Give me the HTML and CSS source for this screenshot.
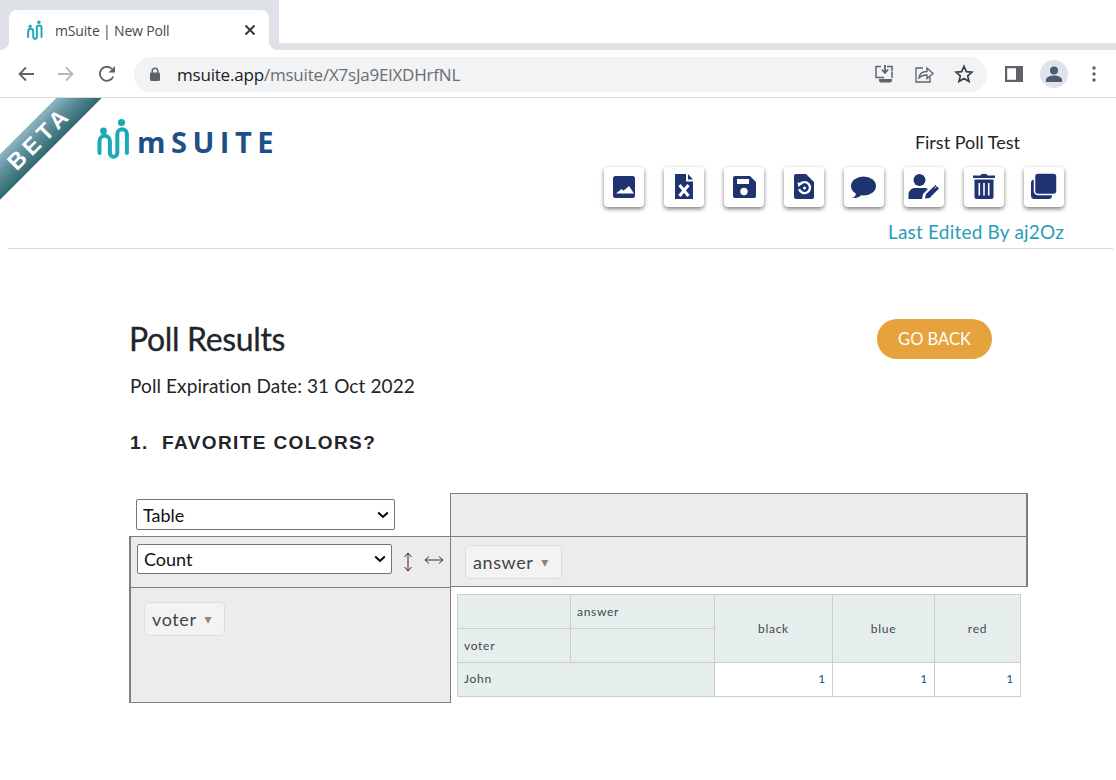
FILE: index.html
```html
<!DOCTYPE html>
<html lang="en">
<head>
<meta charset="utf-8">
<title>mSuite | New Poll</title>
<link rel="stylesheet" href="styles.css">
</head>
<body>
<svg class="defs" width="0" height="0" aria-hidden="true">
  <symbol id="mark" viewBox="96 117 33 43">
    <circle cx="103.5" cy="130" r="3.4" fill="#1ba9b5"/>
    <circle cx="121.5" cy="121.5" r="3.6" fill="#1ba9b5"/>
    <path d="M99.5 152V140a5.2 5.2 0 0 1 10.4 0V152a3.7 3.7 0 0 0 7.400 0V133a4.800 4.800 0 0 1 9.600 0V152" fill="none" stroke="#1ba9b5" stroke-width="4" stroke-linecap="round"/>
  </symbol>
</svg>

<div class="tabstrip">
  <div class="tabzone">
    <div class="tab">
      <svg class="favicon" width="17" height="21"><use href="#mark"/></svg>
      <span class="tab-title">mSuite | New Poll</span>
      <svg class="tab-close" width="12" height="12" viewBox="0 0 12 12"><path d="M1.5 1.5l9 9M10.5 1.5l-9 9" stroke="#33363b" stroke-width="1.9"/></svg>
    </div>
  </div>
  <div class="strip-rest"><div class="strip-white"></div></div>
</div>

<div class="toolbar">
  <svg class="nav" width="18" height="18" viewBox="0 0 18 18"><path d="M17 9H2.5M9 2.5L2.5 9 9 15.5" fill="none" stroke="#5f6368" stroke-width="1.8"/></svg>
  <svg class="nav" width="18" height="18" viewBox="0 0 18 18"><path d="M1 9h14.5M9 2.5L15.5 9 9 15.500" fill="none" stroke="#b4b7bb" stroke-width="1.8"/></svg>
  <svg class="nav" width="18" height="18" viewBox="0 0 18 18"><path d="M15.300 11.500A7 7 0 1 1 14 4" fill="none" stroke="#5f6368" stroke-width="1.800"/><path d="M17 1v6.500h-6.500z" fill="#5f6368"/></svg>
  <div class="omnibox">
    <svg class="lock" width="12" height="14" viewBox="0 0 12 14"><path d="M3.200 6V4a2.800 2.800 0 0 1 5.600 0v2" fill="none" stroke="#5f6368" stroke-width="1.500"/><rect x="1" y="5.500" width="10" height="8.500" rx="1.300" fill="#5f6368"/></svg>
    <span class="url"><span class="url-host">msuite.app</span>/msuite/X7sJa9ElXDHrfNL</span>
    <div class="omni-icons">
      <svg width="20" height="20" viewBox="0 0 20 20"><path d="M7 2.500H2v11h8M13 2.500h5v5" fill="none" stroke="#5f6368" stroke-width="1.500"/><path d="M11 1v7M7.800 5.500L11 9l3.200-3.500" fill="none" stroke="#5f6368" stroke-width="1.800"/><path d="M5 15h13v1.500a2 2 0 0 1-2 2H7a2 2 0 0 1-2-2z" fill="#5f6368"/><path d="M18 8v6" stroke="#5f6368" stroke-width="1.500"/></svg>
      <svg width="20" height="20" viewBox="0 0 20 20"><path d="M9 4H2v14h14v-5" fill="none" stroke="#5f6368" stroke-width="1.300"/><path d="M5 14c.5-4 3.500-6.500 8-6.500V4l6 5.500-6 5V11c-3.500 0-6 1-8 3z" fill="none" stroke="#5f6368" stroke-width="1.300"/></svg>
      <svg width="20" height="20" viewBox="0 0 20 20"><path d="M10 2.300l2.300 5.300 5.700.5-4.300 3.800 1.300 5.600-5-3-5 3 1.300-5.600L2 8.100l5.700-.5z" fill="none" stroke="#3c4043" stroke-width="1.700"/></svg>
    </div>
  </div>
  <svg class="panel-icon" width="18" height="18" viewBox="0 0 18 18"><path fill-rule="evenodd" d="M0 1h18v16H0zM2.200 3.200v11.600h8.800V3.200z" fill="#5f6368"/></svg>
  <div class="avatar"><svg width="20" height="20" viewBox="0 0 20 20"><circle cx="10" cy="6.500" r="4" fill="#4d5a72"/><path d="M2 18v-2c0-3 4-4.500 8-4.500s8 1.500 8 4.500v2z" fill="#4d5a72"/></svg></div>
  <svg class="dots" width="4" height="16" viewBox="0 0 4 16"><circle cx="2" cy="2" r="1.700" fill="#5f6368"/><circle cx="2" cy="8" r="1.700" fill="#5f6368"/><circle cx="2" cy="14" r="1.700" fill="#5f6368"/></svg>
</div>

<div class="beta"><div class="beta-band">BETA</div></div>

<header class="apphead">
  <div class="logo">
    <svg width="33" height="43"><use href="#mark"/></svg>
    <span class="logo-text">mSUITE</span>
  </div>
  <div class="head-right">
    <div class="doc-title">First Poll Test</div>
    <div class="actions">
      <button class="action"><svg viewBox="0 0 40 40"><rect x="9" y="9" width="22" height="22" rx="2.500"/><path d="M12 26.500l5.500-4.500 2 1.800L25 19l5 7.500z" fill="#fff"/></svg></button>
      <button class="action"><svg viewBox="0 0 40 40"><path d="M11 7h11v7.500h7V32H11z"/><path d="M24 7l5 5.500h-5z"/><path d="M15.500 18l9 11M24.500 18l-9 11" stroke="#fff" stroke-width="3"/></svg></button>
      <button class="action"><svg viewBox="0 0 40 40"><path fill-rule="evenodd" d="M11 9h15l6 6v14a2 2 0 0 1-2 2H11a2 2 0 0 1-2-2V11a2 2 0 0 1 2-2zM13 12v5h12v-5z"/><circle cx="20" cy="24.500" r="3.700" fill="#fff"/></svg></button>
      <button class="action"><svg viewBox="0 0 40 40"><path d="M12 7h10l8 8v15a2 2 0 0 1-2 2H12a2 2 0 0 1-2-2V9a2 2 0 0 1 2-2z"/><path d="M16 17.500a5.500 5.500 0 1 1-.800 4.500" fill="none" stroke="#fff" stroke-width="2.400"/><path d="M13.500 15.500l5.500.500-4.500 4z" fill="#fff"/><circle cx="20.500" cy="21" r="1.500" fill="#fff"/></svg></button>
      <button class="action"><svg viewBox="0 0 40 40"><ellipse cx="19.500" cy="19" rx="12.500" ry="9.500"/><path d="M12 25l-.5 3.500c-.5 1-2 2-3.500 2.500 3.500.300 6.500-.500 9-2.500z"/></svg></button>
      <button class="action"><svg viewBox="0 0 40 40"><circle cx="15.500" cy="13" r="6"/><path d="M4.500 32v-4c0-4 3-7 6-7h10c1.500 0 2.500.500 3.500 1l-5 5-1 5z"/><path d="M21 31.500l1-4.500 9.500-9 3.500 3.500-9.500 9.500z"/><path d="M30.500 21.300l2-2" stroke="#fff" stroke-width="1"/></svg></button>
      <button class="action"><svg viewBox="0 0 40 40"><path d="M9 8.500h7.500L17.500 7h5l1 1.500H31V11H9z"/><path fill-rule="evenodd" d="M10.500 12.500h19V30a2 2 0 0 1-2 2h-15a2 2 0 0 1-2-2zM14.500 16v12.500h1.600V16zM19.200 16v12.500h1.600V16zM23.900 16v12.500h1.600V16z"/></svg></button>
      <button class="action"><svg viewBox="0 0 40 40"><rect x="7" y="12.500" width="21" height="19.500" rx="3.500"/><rect x="10.500" y="6" width="22.500" height="21.500" rx="3.500" stroke="#fff" stroke-width="1.500"/></svg></button>
    </div>
    <div class="last-edited">Last Edited By aj2Oz</div>
  </div>
</header>

<main class="content">
  <div class="title-row">
    <h1 class="page-title">Poll Results</h1>
    <button class="go-back">GO BACK</button>
  </div>
  <p class="expiry">Poll Expiration Date: 31 Oct 2022</p>
  <h2 class="question">1.&nbsp; FAVORITE COLORS?</h2>

  <div class="pivot">
    <div class="cell-render">
      <select class="pick pick-render"><option>Table</option></select>
    </div>
    <div class="cell cell-top"></div>
    <div class="cell cell-aggr">
      <select class="pick pick-aggr"><option>Count</option></select>
      <svg class="sort-v" width="10" height="20" viewBox="0 0 10 20"><path d="M5 1v18" stroke="#7b2d7b" stroke-width="1.200"/><path d="M1.500 5L5 1l3.500 4M1.500 15L5 19l3.500-4" fill="none" stroke="#333" stroke-width="1"/></svg>
      <svg class="sort-h" width="20" height="10" viewBox="0 0 20 10"><path d="M1 5h18" stroke="#333" stroke-width="1"/><path d="M5 1.500L1 5l4 3.500M15 1.500L19 5l-4 3.500" fill="none" stroke="#333" stroke-width="1"/></svg>
    </div>
    <div class="cell cell-cols"><span class="pill">answer <span class="caret">▾</span></span></div>
    <div class="cell cell-rows"><span class="pill">voter <span class="caret">▾</span></span></div>
    <div class="cell-out">
      <table class="pvt">
        <colgroup><col class="c1"><col class="c2"><col class="c3"><col class="c4"><col class="c5"></colgroup>
        <tr><th class="tl"></th><th class="tl">answer</th><th rowspan="2">black</th><th rowspan="2">blue</th><th rowspan="2">red</th></tr>
        <tr><th class="bl">voter</th><th></th></tr>
        <tr><th colspan="2" class="row-h">John</th><td>1</td><td>1</td><td>1</td></tr>
      </table>
    </div>
  </div>
</main>
</body>
</html>
```
FILE: styles.css
```css
* { box-sizing: border-box; }
html, body { margin: 0; padding: 0; }
body {
  width: 1116px;
  height: 780px;
  overflow: hidden;
  background: #fff;
  color: #212529;
  font-family: "Lato", sans-serif;
  position: relative;
}
.defs { position: absolute; }

/* browser chrome */
.tabstrip { display: flex; height: 50px; }
.tabzone {
  width: 279px;
  background: #dee1e6;
  padding: 10px 10px 0 9px;
}
.tab {
  position: relative;
  height: 40px;
  background: #fff;
  border-radius: 8px 8px 0 0;
  display: flex;
  align-items: center;
  padding: 0 13px 0 17px;
}
.tab::before, .tab::after {
  content: "";
  position: absolute;
  bottom: 0;
  width: 8px;
  height: 8px;
}
.tab::before { left: -8px; background: radial-gradient(circle at 0 0, #dee1e6 7.5px, #fff 8px); }
.tab::after { right: -8px; background: radial-gradient(circle at 100% 0, #dee1e6 7.5px, #fff 8px); }
.favicon { flex: none; }
.tab-title {
  margin-left: 12px;
  flex: 1;
  font: 14px "Open Sans", sans-serif;
  letter-spacing: -.17px;
  color: #45494e;
}
.strip-rest { flex: 1; display: flex; flex-direction: column; background: #dee1e6; }
.strip-white { height: 43px; background: #fff; }

.toolbar {
  height: 48px;
  border-bottom: 1px solid #d9dbde;
  display: flex;
  align-items: center;
  padding: 1px 0 0 17px;
}
.nav { margin-right: 22px; flex: none; }
.nav:nth-child(2) { margin-right: 23px; }
.nav:nth-child(3) { margin-right: 18px; }
.omnibox {
  width: 853px;
  height: 35px;
  background: #f1f3f4;
  border-radius: 18px;
  display: flex;
  align-items: center;
  padding: 0 13px 0 15px;
}
.lock { flex: none; }
.url {
  margin-left: 16px;
  font: 17px "Open Sans", sans-serif;
  letter-spacing: -.2px;
  color: #6a6e73;
  flex: 1;
}
.url-host { color: #202124; }
.omni-icons { display: flex; gap: 20px; }
.panel-icon { margin-left: 18px; flex: none; }
.avatar {
  margin-left: 17px;
  width: 28px;
  height: 28px;
  border-radius: 50%;
  background: #e0e3ea;
  display: flex;
  align-items: center;
  justify-content: center;
  flex: none;
}
.dots { margin-left: 24px; flex: none; }

/* ribbon */
.beta {
  position: absolute;
  left: 0;
  top: 98px;
  width: 102px;
  height: 102px;
  overflow: hidden;
}
.beta-band {
  position: absolute;
  left: -41px;
  top: 24px;
  width: 160px;
  height: 32px;
  transform: rotate(-45deg);
  text-align: center;
  background: linear-gradient(180deg, #8fb4c6 0%, #5d8e9a 45%, #2f6a6c 100%);
  color: #fff;
  font: bold 23px/33px "Liberation Sans", sans-serif;
  letter-spacing: 4.500px;
}

/* app header */
.apphead {
  height: 151px;
  margin: 0 3px 0 8px;
  border-bottom: 1px solid #d8d8d8;
  display: flex;
  justify-content: space-between;
  padding: 0 49px 0 88px;
}
.logo { display: flex; align-items: flex-start; padding-top: 20px; }
.logo svg { flex: none; }
.logo-text {
  margin: 6px 0 0 8px;
  font: bold 29px/36px "Open Sans", sans-serif;
  letter-spacing: 5.500px;
  color: #1f4f88;
}
.head-right { display: flex; flex-direction: column; align-items: flex-end; }
.doc-title {
  margin: 31px 44px 0 0;
  font-size: 18px;
  line-height: 26px;
  color: #212529;
}
.actions { display: flex; gap: 20px; margin-top: 12px; }
.action {
  width: 40px;
  height: 40px;
  padding: 0;
  border: 0;
  background: #fff;
  border-radius: 4px;
  box-shadow: 0 2px 4px rgba(0,0,0,.5);
}
.action svg { display: block; width: 40px; height: 40px; fill: #1f3370; }
.last-edited {
  margin-top: 12px;
  font-size: 19px;
  line-height: 26px;
  letter-spacing: .2px;
  color: #2a9cb8;
}

/* content */
.content { padding: 70px 0 0 130px; }
.title-row {
  width: 862px;
  display: flex;
  justify-content: space-between;
  align-items: flex-start;
}
.page-title {
  margin: 0 0 0 -1px;
  font-size: 32px;
  line-height: 40px;
  letter-spacing: -.35px;
  font-weight: 400;
  color: #212529;
  -webkit-text-stroke: .3px #212529;
}
.go-back {
  width: 115px;
  height: 40px;
  border: 0;
  padding: 0;
  border-radius: 20px;
  background: #e6a23c;
  color: #fff;
  font: 16.500px "Lato", sans-serif;
}
.expiry {
  margin: 13px 0 0;
  font-size: 19px;
  line-height: 28px;
  letter-spacing: .1px;
  color: #212529;
}
.question {
  margin: 30px 0 0;
  font: bold 19px/26px "Liberation Sans", sans-serif;
  letter-spacing: 1.400px;
  color: #212529;
}

/* pivot */
.pivot {
  margin: 37px 0 0 -1px;
  display: grid;
  grid-template-columns: 321px 578px;
  grid-template-rows: 43px 51px 116px;
}
.cell {
  background: #ececec;
  border: 1px solid #7f7f7f;
  display: flex;
}
.cell-render { padding: 6px 0 0 7px; }
.pick {
  display: block;
  appearance: none;
  padding: 0 22px 0 6px;
  background: #fff url("data:image/svg+xml,%3Csvg xmlns='http://www.w3.org/2000/svg' width='12' height='8'%3E%3Cpath d='M1.200 1.500L6 6l4.800-4.500' fill='none' stroke='%23000' stroke-width='2'/%3E%3C/svg%3E") no-repeat right 5px center;
  border: 1px solid #767676;
  border-radius: 2px;
  font: 18px "Lato", sans-serif;
  color: #111;
}
.pick-render { width: 259px; height: 31px; }
.pick-aggr { width: 255px; height: 30px; flex: none; }
.cell-top { border-bottom: 0; border-right-width: 2px; }
.cell-aggr {
  align-items: flex-start;
  padding: 7px 0 0 6px;
  border-bottom: 0;
  border-right: 0;
  border-left-width: 2px;
}
.sort-v { margin: 8px 0 0 11px; flex: none; }
.sort-h { margin: 11px 0 0 11px; flex: none; }
.cell-cols {
  align-items: flex-start;
  padding: 8px 0 0 14px;
  border-right-width: 2px;
}
.cell-rows {
  border-left-width: 2px;
  border-right: 0;
  border-top: 1px solid #7f7f7f;
  padding: 14px 0 0 13px;
  align-items: flex-start;
}
.pill {
  display: inline-block;
  height: 34px;
  padding: 0 12px 0 7px;
  border: 1px solid #dddddd;
  border-radius: 5px;
  background: #f3f3f3;
  font-size: 18px;
  line-height: 33px;
  letter-spacing: .6px;
  color: #444;
}
.caret { color: #888; font-size: 14px; margin-left: 3px; vertical-align: 2px; font-family: "DejaVu Sans", sans-serif; }
.cell-out { padding: 7px 0 0 6px; border-left: 1px solid #7f7f7f; }

.pvt {
  border-collapse: collapse;
  table-layout: fixed;
  width: 563px;
  font-size: 12px;
  letter-spacing: .7px;
  color: #3d4a4a;
}
.c1 { width: 113px; }
.c2 { width: 144px; }
.c3 { width: 118px; }
.c4 { width: 102px; }
.c5 { width: 86px; }
.pvt tr { height: 34px; }
.pvt th {
  background: #e6eeed;
  border: 1px solid #cdcdcd;
  font-weight: 400;
  padding: 5px;
}
.pvt th.tl, .pvt th.bl, .pvt th.row-h { text-align: left; }
.pvt th:not([rowspan]) { padding-left: 6px; }
.pvt th.tl { vertical-align: top; padding-top: 9px; }
.pvt th.bl { vertical-align: bottom; padding-bottom: 9px; }
.pvt th.row-h { padding-top: 4px; padding-bottom: 6px; }
.pvt td {
  background: #fff;
  border: 1px solid #cdcdcd;
  text-align: right;
  padding: 4px 6px 6px;
  color: #1f4f88;
}
```
